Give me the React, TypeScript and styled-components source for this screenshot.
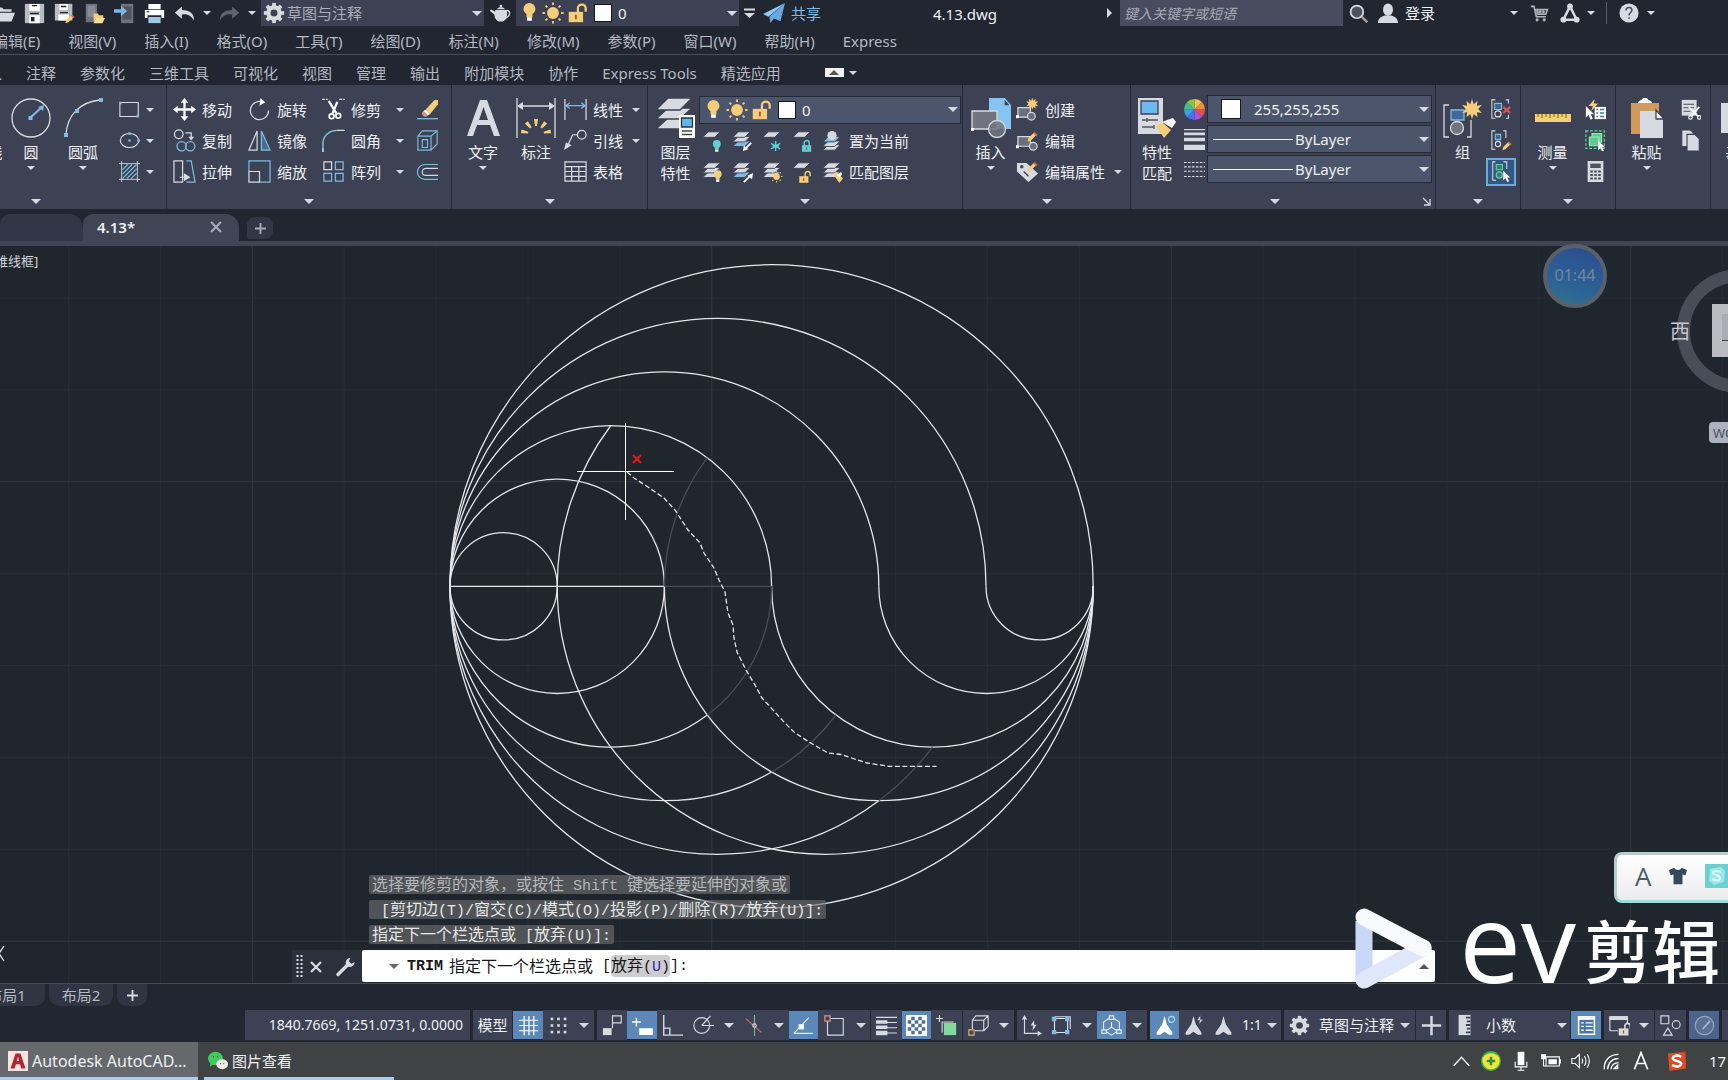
import React from "react";
import styled, { createGlobalStyle, css } from "styled-components";

const c = {
  dark: "#212631",
  panel: "#3c4253",
  field: "#4b556b",
  line: "#232935",
  text: "#eef0f4",
  menu: "#b4b9c3",
  icon: "#d7dae1",
  blue: "#7fbbe3",
  yellow: "#f6cd79",
  on: "#5b88b9",
};

const Global = createGlobalStyle`
  *, *::before, *::after { box-sizing: border-box; }
  html, body { margin: 0; height: 100%; overflow: hidden; background: ${c.dark}; }
  body { font: 15px/20px "Noto Sans", "Noto Sans CJK SC", sans-serif; color: ${c.text}; }
  button, input, select { font: inherit; color: inherit; margin: 0; padding: 0; border: 0; background: none; border-radius: 0; outline: none; }
  button { white-space: nowrap; cursor: pointer; }
`;

const Page = styled.div`
  display: flex;
  flex-direction: column;
  height: 100vh;
  overflow: hidden;
`;

const Caret = styled.span<{ $big?: boolean; $up?: boolean }>`
  flex: none;
  width: 0;
  height: 0;
  border: solid transparent;
  border-width: ${(p) => (p.$big ? "5px" : "4px")};
  border-top-color: ${c.icon};
  border-bottom-width: 0;
  ${(p) =>
    p.$up &&
    css`
      border-width: 0 5px 5px;
      border-bottom-color: #555;
    `}
`;

const Svg = styled.svg<{ $w?: number; $h?: number }>`
  flex: none;
  display: block;
  width: ${(p) => p.$w ?? 22}px;
  height: ${(p) => p.$h ?? p.$w ?? 22}px;
  fill: none;
  stroke: ${c.icon};
  stroke-width: 1.3;
`;

/* ---------- icon drawings, on a 24 unit square ---------- */
const W = c.icon;
const B = c.blue;
const Y = c.yellow;
const sheet = (y: number, fill = W) => <path d={`M8 ${y}h13l-6 6H2z`} fill={fill} stroke={c.panel} strokeWidth="1" />;
const bulb = (x: number, y: number, s: number, fill = Y) => (
  <g transform={`translate(${x} ${y}) scale(${s})`} stroke="none">
    <circle cx="5" cy="5" r="5" fill={fill} />
    <path d="M2.5 8h5v4h-5z" fill={fill} />
    <path d="M3 12h4v3H3z" fill="#fff" />
  </g>
);
const sunRays = [0, 45, 90, 135, 180, 225, 270, 315];
const sun = (x: number, y: number, s: number) => (
  <g transform={`translate(${x} ${y}) scale(${s})`}>
    <circle r="5.6" fill={Y} stroke="none" />
    {sunRays.map((a) => (
      <path key={a} d="M0-7.6V-10" transform={`rotate(${a})`} stroke={Y} strokeWidth="1.8" />
    ))}
  </g>
);
const lock = (x: number, y: number, s: number, fill = Y, open = true) => (
  <g transform={`translate(${x} ${y}) scale(${s})`}>
    <path d={open ? "M8 8V4a3.4 3.4 0 0 1 6.8 0v3" : "M3 8V4a3.4 3.4 0 0 1 6.8 0v4"} stroke={fill} strokeWidth="2" />
    <path d="M0 7h12.5v9H0z" fill={fill} stroke="none" />
    <path d="M6.2 9.5v4" stroke="#a4552c" strokeWidth="1.6" />
  </g>
);
const arrowCursor = (x: number, y: number, s = 1) => (
  <path d="M0 0v11l2.6-2.4L4.6 13l2-1-2-4.2H8z" transform={`translate(${x} ${y}) scale(${s})`} fill="#fff" stroke="none" />
);
const pencil = (x: number, y: number) => (
  <g transform={`translate(${x} ${y})`} stroke="none">
    <path d="M0 9l1-3.5L6.5 0 9 2.5 3.5 8z" fill={Y} />
    <path d="M6 .6L7.5-1l3 3L9 3.4z" fill="#e26a55" />
  </g>
);
const star = (x: number, y: number, s: number) => (
  <path
    transform={`translate(${x} ${y}) scale(${s})`}
    d="M0-9l1.6 4.6L5-7.4 4.4-3 9-3.6 5.6 0 9 3.6 4.4 3 5 7.4 1.6 4.6 0 9l-1.6-4.4L-5 7.4-4.4 3-9 3.6-5.6 0-9-3.6-4.4-3-5-7.4l3.4 3z"
    fill={Y}
    stroke="none"
  />
);
const aMan = <path d="M12 1l2.6 9.5L21 20v2.5h-4L12 19l-5 3.5H3V20l6.4-9.5z" fill={W} stroke="none" />;
const gear = (
  <g stroke="none" fill={W}>
    {[0, 45, 90, 135].map((a) => (
      <path key={a} d="M10 1h4v22h-4z" transform={`rotate(${a} 12 12)`} />
    ))}
    <circle cx="12" cy="12" r="8.5" />
    <circle cx="12" cy="12" r="3.8" fill={c.panel} />
  </g>
);

const icons: Record<string, React.ReactNode> = {
  folder: <path d="M0 5h9l2 2h9v3H6L2 20H0zM7 11h17l-4 10H3z" fill={W} stroke="none" />,
  save: <g stroke="none"><path d="M1 1h22v22H1z" fill="#b9bcc3" /><path d="M6 1h12v8H6zM6 14h12v9H6z" fill="#fff" /><path d="M9 3h6M7 12h10" stroke={c.dark} strokeWidth="1.5" /><path d="M8 16h4v5H8z" fill={c.dark} /></g>,
  saveAs: <g stroke="none"><path d="M1 1h20v19H1z" fill="#b9bcc3" /><path d="M6 1h10v7H6zM5 13h12v7H5z" fill="#fff" /><path d="M7 11h9M8 4h6" stroke={c.dark} strokeWidth="1.5" />{pencil(13, 14)}</g>,
  openCloud: <g stroke="none"><path d="M2 1h13v21H2z" fill="#6d727c" /><path d="M4 3h9v13H4z" fill="#868b95" /><path d="M11 12h5l1 2h5v3H14l-3 5z" fill={Y} /><path d="M14 17h10l-3 6H11z" fill="#ffdf9a" /></g>,
  saveCloud: <g stroke="none"><path d="M8 1h14v22H8z" fill="#6d727c" /><path d="M10 4h10v15H10z" fill="#4d525d" /><path d="M0 7h8V3l7 6-7 6v-4H0z" fill="#76b9e8" /></g>,
  print: <g stroke="none"><path d="M5 1h14v6H5zM1 8h22v9h-3v-3H4v3H1z" fill="#fff" /><path d="M5 16h14v7H5z" fill="#9cc9e6" /><path d="M3 10h3" stroke={c.dark} /></g>,
  undo: <path d="M9 4L1 11l8 7v-5c7-1 11 2 14 7 0-8-5-12-14-12z" fill={W} stroke="none" />,
  redo: <path d="M15 4l8 7-8 7v-5C8 12 4 15 1 20 1 12 6 8 15 8z" fill="#5d636f" stroke="none" />,
  gear,
  teapot: <g stroke="none" fill={W}><path d="M6 8h13c2 6-1 12-4 13h-5c-3-1-5-5-5-8L0 9l1-2 5 3zM8 7c1-3 8-3 9 0z" /><circle cx="12.5" cy="3.5" r="1.5" /><path d="M18 9c5-2 7 5-1 9" fill="none" stroke={W} strokeWidth="1.6" /></g>,
  bulb: bulb(6, 1, 1.3),
  sun: sun(12, 12, 1.15),
  lock: lock(3, 2, 1.25),
  plane: <g stroke="none"><path d="M24 1L0 13l6 3z" fill="#8ecbf5" /><path d="M24 1L7 16l1 7 4-5 7 3z" fill="#64ace0" /></g>,
  search: <g><circle cx="10" cy="10" r="8" fill="#4d525d" strokeWidth="2.2" /><path d="M16 16l7 7" stroke="#a99f92" strokeWidth="3" /></g>,
  user: <g stroke="none" fill={W}><ellipse cx="12" cy="8" rx="6" ry="7.5" /><path d="M0 24c0-7 6-8 8-9h8c2 1 8 2 8 9z" /></g>,
  cart: <g stroke="#b3b6bd" strokeWidth="2"><path d="M1 3h4l3 13h12M7 7h15l-2 6H8.5" /><path d="M9 8l1 4M13 8v4M17 8v4" strokeWidth="3" /><circle cx="9" cy="20" r="1" /><circle cx="18" cy="20" r="1" /></g>,
  tri: <g strokeWidth="3"><path d="M12 4L4 20h16z" /><circle cx="12" cy="4" r="2" fill={W} /><circle cx="4" cy="20" r="2" fill={W} /><circle cx="20" cy="20" r="2" fill={W} /></g>,
  help: <g><circle cx="12" cy="12" r="11.5" fill={W} stroke="none" /><path d="M8.5 9c0-5 7-4.5 7-.5 0 3-3.5 3-3.5 6.5M12 17v2" stroke="#444a57" strokeWidth="1.8" /></g>,
  rect: <g><path d="M1 4h21v16H1z" /><path d="M0 3h3v3H0zM20 18h3v3h-3z" fill={B} stroke="none" /></g>,
  ellipse: <g><ellipse cx="12" cy="12" rx="10.5" ry="8" /><circle cx="12" cy="12" r="1.5" fill={B} stroke="none" /><path d="M10.5 2.5h3v3h-3zM21 10.5h3v3h-3z" fill={B} stroke="none" /></g>,
  hatch: <g><path d="M3 0v24M21 0v24M0 3h24M0 21h24" strokeWidth="1" /><path d="M4 10l6-6M4 15L15 4M4 20L20 4M9 20L20 9M14 20l6-6" stroke={B} /></g>,
  move: <g strokeWidth="2.4" stroke="#fff"><path d="M12 4v16M4 12h16" /><path d="M12 0l4 5H8zM12 24l4-5H8zM0 12l5-4v8zM24 12l-5-4v8z" fill="#fff" stroke="none" /></g>,
  rotate: <g><path d="M16 4.5A9.5 9.5 0 1 0 21.5 13" /><path d="M13 0l5 4.5-6 3.5z" fill="#fff" stroke="none" /></g>,
  trim: <g><path d="M0 1.500h6M18 1.500h6" strokeDasharray="3 1" /><path d="M7 3l8 13M16 4l-5 12" stroke="#fff" strokeWidth="2.4" /><circle cx="10" cy="19" r="2.500" stroke="#fff" strokeWidth="1.800" /><circle cx="17" cy="18.500" r="2.500" stroke="#fff" strokeWidth="1.800" /></g>,
  erase: <g stroke="none"><path d="M10 12L20 1h4v5L15 17z" fill={Y} /><path d="M7 14l3-2 5 5-3 2z" fill="#fff" /><path d="M6 15c1-2 3 0 4 1s3 3 1 4-3 0-4-1-2-2-1-4z" fill="#e88a86" /><path d="M0 22.5h24" stroke={B} strokeWidth="1.5" /></g>,
  copy: <g><circle cx="6" cy="5.5" r="4.5" /><circle cx="9" cy="18" r="4.8" stroke={B} /><circle cx="18" cy="18" r="4.8" stroke={B} /><path d="M13 4h6v5" /><path d="M16 8h6l-3 4z" fill={W} stroke="none" /></g>,
  mirror: <g><path d="M9.5 2v20H1z" /><path d="M14 2v20h9z" stroke={B} fill="#4a6d8c" /></g>,
  fillet: <g><path d="M1 24V15C1 7 8 1.5 15 1.5" stroke={B} strokeWidth="1.5" /><path d="M15 1.5h9M1 20v4" /></g>,
  box: <g stroke={B}><path d="M1 7h15v16H1zM6 1h17v15l-7 7M1 7l5-6M16 7l7-6" /><path d="M6 11h6v9H6z" /></g>,
  stretch: <g><path d="M1 1h9v22H1z" /><path d="M14 1h5l4 22h-9" stroke={B} /><path d="M7 18h8M12 15l5 3-5 3z" fill={W} /></g>,
  scale: <g><path d="M1 12V1h22v22H12" stroke={B} /><path d="M1 12h11v11H1z" /></g>,
  array: <g stroke={B}><path d="M2 2h8v8H2z" stroke={W} /><path d="M14 2h8v8h-8zM2 14h8v8H2zM14 14h8v8h-8z" /></g>,
  offset: <g><path d="M24 4H9a8 8 0 0 0 0 17h15" stroke={B} /><path d="M24 8.5H10a4 4 0 0 0 0 8h14" /></g>,
  linear: <g><path d="M1 1v22M23 1v22" /><path d="M2 8h20M6 5L2 8l4 3M18 5l4 3-4 3" stroke={B} /></g>,
  leader: <g><circle cx="18.5" cy="6" r="4.5" /><path d="M14 6H9L3 19" /><path d="M0 22l2-8 6 3z" fill={W} stroke="none" /></g>,
  table: <g><path d="M1 2h22v20H1zM1 7h22M1 12h22M1 17h22M8 7v15M15.5 7v15" /></g>,
  layOff: <g>{sheet(2)}{bulb(13, 11, 0.85, "#5fd0d4")}</g>,
  layIso: <g>{sheet(12, B)}{sheet(7)}{sheet(2)}<path d="M22 14l-6 6" stroke="#fff" strokeWidth="2" /><path d="M13 23l1-6 5 4z" fill="#fff" stroke="none" /></g>,
  layFrz: <g>{sheet(2)}<path d="M16 12v11M11 14.5l10 6M21 14.5l-10 6M12.5 17.5h7" stroke="#5fd0d4" strokeWidth="1.6" /></g>,
  layLock: <g>{sheet(2)}{lock(12, 11, 0.8, "#5fd0d4", false)}</g>,
  layCur: <g>{sheet(16)}{sheet(12)}{sheet(7, B)}<circle cx="12" cy="6" r="5" fill={W} stroke="none" /></g>,
  layOn: <g>{sheet(12)}{sheet(7)}{sheet(2)}{bulb(14, 10, 0.85)}</g>,
  layUniso: <g>{sheet(12, B)}{sheet(7)}{sheet(2)}<path d="M14 23l6-6" stroke="#fff" strokeWidth="2" /><path d="M24 13l-1 7-5-4z" fill="#fff" stroke="none" /></g>,
  layThaw: <g>{sheet(12)}{sheet(7)}{sheet(2)}{sun(17, 17, 0.65)}</g>,
  layUnlock: <g>{sheet(2)}{lock(9, 11, 0.8)}</g>,
  layMatch: <g>{sheet(12)}{sheet(7)}{sheet(2)}<path d="M13 14l4-2 7 7-4 5z" fill={Y} stroke="none" /><path d="M17 15l5-3 1 3-3 3z" fill="#fff" stroke="none" /></g>,
  create: <g><path d="M2 10h13v10H2z" fill="#6a6f7c" /><circle cx="16" cy="19" r="4" fill="#6a6f7c" /><path d="M0 18h3v3H0z" fill="#fff" stroke="none" />{star(17, 6, 0.7)}</g>,
  editBlk: <g><path d="M2 8h13v10H2z" fill="#6a6f7c" /><circle cx="18" cy="18" r="4" fill="#6a6f7c" /><path d="M0 17h3v3H0z" fill="#fff" stroke="none" />{pencil(12, 4)}</g>,
  editAttr: <g><path d="M1 3h10l12 11-10 9L1 12z" fill={W} stroke="none" /><circle cx="6" cy="7" r="1.8" fill={c.panel} stroke="none" /><path d="M8 12l5 5" stroke={c.panel} />{pencil(12, 3)}</g>,
  wheel: <g stroke="none">{["#f2c14e", "#f08b3e", "#e0524d", "#b04ee0", "#4e6be8", "#3aa0e8", "#3ec28e", "#8bc34a"].map((f, i) => <path key={f} d="M12 12V0a12 12 0 0 1 8.49 3.51z" fill={f} transform={`rotate(${i * 45} 12 12)`} />)}</g>,
  weights: <g fill={W} stroke="none"><path d="M0 0h24v1.5H0zM0 4h24v3H0zM0 10h24v4H0zM0 18h24v6H0z" /></g>,
  dashes: <path d="M0 4h24M0 9h24M0 14h24M0 20h24" strokeDasharray="3 1.5" strokeWidth="1.4" />,
  ungroup: <g><path d="M5 1H1v21h4M17 1h3v4M17 22h3v-4" strokeWidth="1.2" /><path d="M4 5h8v7H4z" fill="#43668c" stroke={B} /><circle cx="8" cy="17" r="3.5" /><path d="M14 9l8 7M22 9l-8 7" stroke="#e05252" strokeWidth="2.5" /></g>,
  groupEdit: <g><path d="M5 1H1v21h4M14 1h3v8" strokeWidth="1.2" /><path d="M5 5h6v6H5z" fill="#43668c" stroke={B} /><circle cx="8" cy="16" r="3" />{pencil(13, 14)}</g>,
  groupSel: <g><path d="M5 1H2v21h4M14 1h4v8" strokeWidth="1.2" /><path d="M6 4h7v6H6z" fill="#3c7a6c" stroke="#63d49a" /><circle cx="9.5" cy="16" r="3.5" fill="#3c7a6c" stroke="#63d49a" />{arrowCursor(14, 11)}</g>,
  quickSel: <g stroke="none"><path d="M11 0L4 8h5l-2 6 8-9h-5z" fill={Y} />{arrowCursor(1, 8, 1.2)}<path d="M11 9h13v14H11z" fill="#fff" /><path d="M13 12h2M13 16h2M13 20h2M17 12h5M17 16h5M17 20h5" stroke="#3d78b5" strokeWidth="1.5" /></g>,
  selAll: <g><path d="M1 1h21v20H1z" stroke="#6fe0a0" strokeDasharray="3 2" /><path d="M8 4h11v10H8z" fill="#63c98f" stroke="#8ff0b8" /><path d="M5 8h11v10H5z" fill="#63c98f" stroke="#8ff0b8" />{arrowCursor(15, 12)}</g>,
  calc: <g stroke="none"><path d="M3 0h18v24H3z" fill={W} /><path d="M6 3h12v5H6z" fill="#4d525d" /><path d="M6 12h12M6 16h12M6 20h12" stroke="#4d525d" strokeWidth="2.5" strokeDasharray="3 1.5" /></g>,
  cut: <g><path d="M2 1h17v18H2z" fill={W} stroke="none" /><path d="M4 6h12M4 10h12M4 14h8" stroke="#4d525d" /><path d="M10 9l11 11M22 9L13 20" stroke="#fff" strokeWidth="2" /><circle cx="12" cy="21" r="2" stroke="#fff" /><circle cx="22" cy="21" r="2" stroke="#fff" /></g>,
  copyDoc: <g fill={W} stroke={c.panel}><path d="M2 0h10l5 5v14H2z" /><path d="M8 5h9l5 5v14H8z" /></g>,
  grid: <path d="M7 1v22M12.5 1v22M18 1v22M1 6h22M1 12h22M1 18h22" stroke="#fff" strokeWidth="1.4" />,
  dots: <g fill={W} stroke="none">{[3, 10.5, 18].map((y) => [3, 10.5, 18].map((x) => <path key={`${x}${y}`} d={`M${x} ${y}h3v3h-3z`} />))}</g>,
  infer: <g><path d="M12 1h10v8H12zM12 9v6" /><path d="M1 15h10v8H1z" fill={W} stroke="none" /></g>,
  dyn: <g stroke="#fff" strokeWidth="1.6"><path d="M5 3v10M0 8h10" /><path d="M9 16h14v6H9z" fill="#fff" /></g>,
  ortho: <path d="M2 0v23h22M2 15h7v8" strokeWidth="1.6" />,
  polar: <g><circle cx="10" cy="12" r="9" /><path d="M10 12L20 1M10 12h14" /></g>,
  iso: <g><path d="M12 0v24" stroke="#78b98a" /><path d="M2 4l18 16" stroke="#b96a64" /><circle cx="12" cy="12" r="2" /></g>,
  track: <g stroke="#dfeaf6"><path d="M1 21L18 3M1 21h22" /><path d="M7 11h5v5H7z" fill="#fff" /></g>,
  osnap: <g><path d="M4 4h18v19H4z" /><path d="M1 1h6v6H1z" stroke="#dd9a82" fill={c.panel} /></g>,
  lwt: <g fill={W} stroke="none"><path d="M0 2h24v1.5H0zM0 8h24v1H0zM0 14h24v1H0zM0 20h24v1H0zM0 6h13v4H0zM0 12h13v4H0zM0 18h13v5H0z" /></g>,
  checker: <g stroke="none"><path d="M0 0h24v24H0z" fill="#fff" />{[0, 1, 2, 3, 4].map((r) => [0, 1, 2, 3, 4].map((k) => (r + k) % 2 ? <path key={`${r}${k}`} d={`M${2 + k * 4} ${2 + r * 4}h4v4h-4z`} fill="#4c6f95" /> : null))}</g>,
  cycle: <g><path d="M4 0v8M0 4h8M7 8h13M7 8v12" /><path d="M9 9h14v14H9z" fill="#7fdc9d" stroke="none" /></g>,
  snap3: <g><path d="M5 6h13v12H8M5 6v10M5 6l4-5h14v12l-5 5M18 6l5-5" /><path d="M1 17h6v6H1z" stroke="#eab26e" /></g>,
  ucs: <g><path d="M4 3v18h17" /><path d="M4 0l3 5H1zM24 21l-5-3v6z" fill={W} stroke="none" /><path d="M15 6l-4 6h3l-1 6 5-7h-3z" fill={W} stroke="none" /></g>,
  filter: <g><path d="M4 4h15v16H4z" stroke="#dfe3ea" /><path d="M4 2h18v14" /><path d="M1 2h5v5H1zM16 2h5v5h-5zM1 17h5v5H1zM16 17h5v5h-5z" fill={B} stroke="none" /></g>,
  gizmo: <g stroke="#e6eef8"><path d="M12 2l9 6v9l-9 6-9-6V8zM12 8v6l-8 5M12 14l8 5" /><path d="M9.5 1h5v4h-5zM1 17h5v4H1zM18 17h5v4h-5z" fill={c.on} /></g>,
  ann1: <g><path d="M12 1l2.6 9.5L21 20v2.5h-4L12 19l-5 3.5H3V20l6.4-9.5z" fill="#fff" stroke="none" /><circle cx="20" cy="5" r="3.5" stroke="#a8dcf5" /></g>,
  ann2: <g>{aMan}<path d="M20 0l-4 6h3l-1 5 5-6h-3z" fill={W} stroke={c.panel} strokeWidth=".6" /></g>,
  ann3: aMan,
  plus: <path d="M12 1v22M1 12h22" strokeWidth="2.8" />,
  ruler: <g><path d="M5 1h13v22H5z" fill={W} stroke="none" /><path d="M18 4h-5M18 8h-4M18 12h-5M18 16h-4M18 20h-5" stroke={c.panel} strokeWidth="2" /></g>,
  props: <g><path d="M3 2h18v20H3z" fill="#4675ad" stroke="#fff" strokeWidth="1.8" /><path d="M3 4h18" stroke="#fff" strokeWidth="3" /><path d="M6 9h3M6 13h3M6 17.5h3M11 9h8M11 13h8M11 17.5h8" stroke="#fff" strokeWidth="1.6" /></g>,
  lockUi: <g><path d="M1 2h20v8M1 2v16h9" /><path d="M1 2h20v3H1z" fill={W} />{lock(11, 9, 0.9, W)}</g>,
  shapes: <g><path d="M1 1h9v9H1z" /><circle cx="18.5" cy="11" r="4.5" /><path d="M9 15l5 8H4z" /></g>,
  gauge: <g><circle cx="12" cy="12" r="10.5" stroke="#8fa5c2" fill="#5a7195" /><path d="M10 16l8-9" stroke="#a9b9cf" strokeWidth="2" /></g>,
};

const Icon = ({ n, s }: { n: string; s?: number }) => (
  <Svg $w={s} viewBox="0 0 24 24" aria-hidden="true">
    {icons[n]}
  </Svg>
);

/* ---------- title bar ---------- */
const TitleBar = styled.header`
  flex: none;
  display: flex;
  align-items: center;
  height: 26px;
  overflow: hidden;
`;
const QuickAccess = styled.div`
  display: flex;
  align-items: center;
  margin: 0 2px 0 -11px;
`;
const Slot = styled.button<{ $w?: number }>`
  flex: none;
  display: flex;
  align-items: center;
  justify-content: center;
  width: ${(p) => p.$w ?? 30}px;
  height: 26px;
`;
const Combo = styled.div<{ $w?: number; $flat?: boolean }>`
  display: flex;
  align-items: center;
  gap: 2px;
  width: ${(p) => (p.$w ? p.$w + "px" : "100%")};
  height: ${(p) => (p.$flat ? 26 : 28)}px;
  padding: 0 2px;
  background: ${(p) => (p.$flat ? c.panel : c.field)};
  border: ${(p) => (p.$flat ? "0" : `1px solid ${c.line}`)};
  position: relative;
  ${Caret} {
    position: absolute;
    right: 2px;
  }
`;
const Select = styled.select<{ $muted?: boolean }>`
  appearance: none;
  flex: 1;
  min-width: 0;
  height: 100%;
  color: ${(p) => (p.$muted ? "#a8adb8" : c.text)};
`;
const Swatch = styled.span<{ $s: number; $m: number }>`
  flex: none;
  width: ${(p) => p.$s}px;
  height: ${(p) => p.$s}px;
  margin: 0 ${(p) => p.$m}px;
  background: #fff;
  border: 1px solid #14181f;
`;
const Share = styled.button`
  display: flex;
  align-items: center;
  gap: 6px;
  color: #7dbcea;
  margin-left: 4px;
`;
const DocName = styled.h1`
  flex: 1;
  margin: 0;
  padding: 2px 0 0 8px;
  font-size: 15px;
  font-weight: 400;
  text-align: center;
`;
const Search = styled.input`
  width: 223px;
  height: 26px;
  padding: 0 4px;
  background: #474d5f;
  &::placeholder {
    color: #a4a9b4;
    font-style: italic;
    font-size: 14px;
    opacity: 1;
  }
`;
const Right = styled.span`
  width: 0;
  height: 0;
  margin: 0 8px 0 6px;
  border: 5px solid transparent;
  border-left-color: ${c.icon};
  border-right: 0;
`;
const Account = styled.div`
  display: flex;
  align-items: center;
  width: 385px;
`;
const Login = styled.button`
  margin: 0 auto 0 2px;
`;
const Rule = styled.span`
  width: 1px;
  height: 22px;
  margin: 0 8px;
  background: #555b68;
`;
const Tail = styled.div`
  flex: none;
  display: flex;
  align-items: center;
  width: 171px;
`;

/* ---------- menus ---------- */
const Menu = styled.nav`
  flex: none;
  display: flex;
  align-items: center;
  gap: 28px;
  height: 29px;
  padding-top: 2px;
  border-bottom: 1px solid #474d59;
  color: ${c.menu};
`;
const MenuItem = styled.button<{ $pull?: number }>`
  flex: none;
  margin-left: ${(p) => (p.$pull ? -p.$pull : 0)}px;
`;
const Tabs = styled(Menu)`
  gap: 24px;
  height: 30px;
  padding-top: 5px;
  border: 0;
`;
const Minimise = styled.button`
  display: flex;
  align-items: center;
  gap: 5px;
  margin-left: 20px;
`;
const MinimiseBox = styled.i`
  display: flex;
  align-items: center;
  justify-content: center;
  width: 19px;
  height: 9px;
  background: #f0f1f4;
`;

/* ---------- ribbon ---------- */
const Ribbon = styled.section`
  flex: none;
  display: flex;
  height: 124px;
  overflow: hidden;
  background: ${c.panel};
`;
const PanelBox = styled.div<{ $w: number; $pull?: number }>`
  flex: none;
  display: flex;
  flex-direction: column;
  width: ${(p) => p.$w}px;
  margin-left: ${(p) => (p.$pull ? -p.$pull : 0)}px;
  border-right: 1px solid ${c.line};
`;
const PanelBody = styled.div<{ $cols: string; $pad: number }>`
  flex: 1;
  display: grid;
  grid-template-columns: ${(p) => p.$cols};
  align-content: start;
  padding: 9px 0 0 ${(p) => p.$pad}px;
`;
const PanelFoot = styled.button<{ $launcher?: boolean }>`
  display: flex;
  align-items: center;
  justify-content: center;
  position: relative;
  height: 16px;
  padding-right: ${(p) => (p.$launcher ? 16 : 0)}px;
  svg {
    position: absolute;
    right: 4px;
  }
`;
const Stack = styled.div<{ $row?: number }>`
  display: grid;
  grid-auto-rows: ${(p) => p.$row ?? 31}px;
  align-content: start;
  align-items: center;
`;
const Tool = styled.button`
  display: flex;
  align-items: center;
  gap: 6px;
  width: 100%;
  height: 28px;
  padding-right: 8px;
  ${Caret} {
    margin-left: auto;
  }
`;
const IconTool = styled.button<{ $on?: boolean }>`
  display: flex;
  align-items: center;
  justify-content: center;
  gap: 6px;
  width: 100%;
  height: 28px;
  ${(p) =>
    p.$on &&
    css`
      background: #34577f;
      border: 2px solid #6ea9dc;
    `}
`;
const Big = styled.button`
  display: flex;
  flex-direction: column;
  align-items: center;
  padding-top: 4px;
  line-height: 21px;
  white-space: pre-line;
  svg {
    margin-bottom: 4px;
  }
  ${Caret} {
    margin-top: 3px;
  }
`;
const LayerRow = styled.div`
  display: flex;
  align-items: center;
  gap: 8px;
  padding-left: 2px;
`;
const Flat = styled.button`
  display: flex;
  align-items: center;
  gap: 6px;
`;
const Sample = styled.span`
  flex: none;
  width: 80px;
  height: 1px;
  margin-left: 3px;
  background: ${c.text};
`;

type PanelProps = { w: number; pad: number; cols: string; pull?: number; foot?: boolean; launcher?: boolean; children: React.ReactNode };
const Panel = ({ w, pad, cols, pull, foot = true, launcher, children }: PanelProps) => (
  <PanelBox $w={w} $pull={pull}>
    <PanelBody $cols={cols} $pad={pad}>
      {children}
    </PanelBody>
    {foot && (
      <PanelFoot aria-label="展开面板" $launcher={launcher}>
        <Caret $big />
        {launcher && (
          <Svg $w={9} viewBox="0 0 9 9">
            <path d="M1 1l6 6M8 2v6H2" />
          </Svg>
        )}
      </PanelFoot>
    )}
  </PanelBox>
);

type BigProps = { label: string; caret?: boolean; w?: number; children: React.ReactNode };
const BigTool = ({ label, caret, w = 40, children }: BigProps) => (
  <Big>
    <Svg $w={w} $h={40} viewBox={`0 0 ${w} 40`} aria-hidden="true">
      {children}
    </Svg>
    {label}
    {caret && <Caret />}
  </Big>
);
type Item = [icon: string, label: string, caret?: boolean];
const ToolStack = ({ items }: { items: Item[] }) => (
  <Stack>
    {items.map(([icon, label, caret]) => (
      <Tool key={label}>
        <Icon n={icon} s={23} />
        {label}
        {caret && <Caret />}
      </Tool>
    ))}
  </Stack>
);
const IconStack = ({ items, caret, on, row }: { items: [string, string][]; caret?: boolean; on?: string; row?: number }) => (
  <Stack $row={row}>
    {items.map(([icon, label]) => (
      <IconTool key={label} aria-label={label} $on={on === icon}>
        <Icon n={icon} s={21} />
        {caret && <Caret />}
      </IconTool>
    ))}
  </Stack>
);
const LayerCombo = ({ w, flat }: { w?: number; flat?: boolean }) => (
  <Combo $w={w} $flat={flat}>
    <Icon n="bulb" />
    <Icon n="sun" />
    <Icon n="lock" />
    <Swatch $s={18} $m={4} />
    <Select aria-label="图层">
      <option>0</option>
    </Select>
    <Caret $big />
  </Combo>
);

/* ---------- document tabs ---------- */
const DocTabs = styled.div`
  flex: none;
  display: flex;
  align-items: flex-end;
  height: 37px;
  padding-top: 5px;
  border-bottom: 5px solid #3f4555;
`;
const DocTab = styled.div<{ $on?: boolean; $w: number }>`
  display: flex;
  align-items: center;
  justify-content: space-between;
  width: ${(p) => p.$w}px;
  height: 27px;
  padding: 0 17px 2px 14px;
  border-radius: 10px 14px 0 0;
  background: ${(p) => (p.$on ? "#3f4555" : "#313746")};
  font-weight: 600;
`;
const Close = styled.button`
  color: #a7acb6;
  display: flex;
`;
const AddTab = styled.button`
  display: flex;
  align-items: center;
  justify-content: center;
  width: 26px;
  height: 22px;
  margin: 0 0 2px 8px;
  border-radius: 8px 8px 8px 2px;
  background: #313746;
`;

/* ---------- drawing area ---------- */
const Canvas = styled.main`
  flex: 1;
  min-height: 0;
  position: relative;
  background: #20262e;
  border-bottom: 1px solid #474c55;
`;
const Drawing = styled.svg`
  display: block;
  width: 100%;
  height: 100%;
  fill: none;
  stroke: #e4e6ea;
  stroke-width: 1.3;
`;
const ViewLabel = styled.span`
  position: absolute;
  left: -18px;
  top: 5px;
  font-size: 13px;
  color: #d3d6da;
`;
const Timer = styled.div`
  position: absolute;
  right: 121px;
  top: -2px;
  width: 64px;
  height: 64px;
  border: 4px solid #59606b;
  border-radius: 50%;
  background: linear-gradient(200deg, #2a4d8e, #2c6596 70%, #2f7488);
  color: #74869c;
  font-size: 16px;
  line-height: 54px;
  text-align: center;
`;
const Compass = styled.div`
  position: absolute;
  right: -73px;
  top: 23px;
  width: 124px;
  height: 124px;
  border: 13px solid #484d57;
  border-radius: 50%;
`;
const West = styled.span`
  position: absolute;
  right: 38px;
  top: 76px;
  font-size: 20px;
  color: #c6c8cd;
`;
const Cube = styled.div`
  position: absolute;
  right: -37px;
  top: 58px;
  width: 53px;
  height: 53px;
  padding: 10px;
  background: #babcc1;
  &::before {
    content: "";
    display: block;
    height: 27px;
    background: #a9adb5;
    border-bottom: 1px solid #3a3f48;
  }
`;
const Wcs = styled.button`
  position: absolute;
  right: -31px;
  top: 176px;
  width: 50px;
  height: 21px;
  padding-left: 4px;
  border-radius: 4px;
  background: #aeb2c0;
  color: #4c5160;
  font-size: 13px;
  line-height: 20px;
  text-align: left;
`;
const Ime = styled.div`
  position: absolute;
  right: -6px;
  top: 606px;
  display: flex;
  align-items: center;
  gap: 18px;
  width: 120px;
  height: 51px;
  padding: 0 0 4px 18px;
  border: 3px solid #b9cdd0;
  border-bottom-color: #9adfdc;
  border-radius: 8px 0 0 8px;
  background: linear-gradient(#fff, #ececee);
  color: #4a5a66;
  font: 26px/40px "Open Sans", sans-serif;
`;
const Brand = styled.div`
  position: absolute;
  right: 8px;
  top: 660px;
  display: flex;
  align-items: center;
  height: 86px;
  color: #fff;
`;
const BrandLatin = styled.span`
  margin: -18px 8px 0 24px;
  font: 500 110px/86px "Open Sans", sans-serif;
`;
const BrandHan = styled.span`
  font: 500 68px/86px "Noto Sans CJK SC", sans-serif;
`;

/* ---------- command line ---------- */
const Command = styled.div`
  position: absolute;
  left: 292px;
  right: 293px;
  bottom: 0;
`;
const History = styled.ol`
  display: flex;
  flex-direction: column;
  align-items: flex-start;
  gap: 6px;
  margin: 0 0 6px 77px;
  padding: 0;
  list-style: none;
`;
const HistoryLine = styled.li<{ $dim?: boolean }>`
  height: 19px;
  padding: 0 3px;
  border-radius: 2px;
  background: rgba(112, 112, 112, 0.62);
  color: ${(p) => (p.$dim ? "#b4b6ba" : "#e6e7e9")};
  font-size: 16px;
  line-height: 19px;
  white-space: pre;
`;
const Mono = styled.code`
  font: 15px/19px "Liberation Mono", monospace;
`;
const Verb = styled(Mono)`
  font-weight: 700;
  margin: 0 6px 0 8px;
`;
const Prompt = styled.div`
  display: flex;
  height: 33px;
`;
const Grip = styled.div`
  display: flex;
  align-items: center;
  gap: 7px;
  width: 70px;
  padding-left: 4px;
  background: #2b303c;
`;
const PromptText = styled.label`
  flex: 1;
  display: flex;
  align-items: center;
  height: 32px;
  padding: 0 6px 0 27px;
  background: #fff;
  border-radius: 2px;
  color: #15171a;
  font-size: 16px;
  white-space: pre;
  input {
    flex: 1;
    min-width: 0;
    height: 28px;
  }
`;
const GreyCaret = styled(Caret)`
  border-top-color: #666;
`;
const Option = styled.button`
  height: 22px;
  border-radius: 4px;
  background: #cdcdcf;
  u {
    color: #2f22b8;
    text-decoration: none;
  }
`;
const Han = ({ children }: { children: string }) => (
  <>{children.split(/([\x20-\x7e]+)/).map((t, i) => (i % 2 ? <Mono key={i}>{t}</Mono> : t))}</>
);

/* ---------- bottom bars ---------- */
const Layouts = styled.div`
  flex: none;
  display: flex;
  height: 26px;
  gap: 4px;
  color: ${c.menu};
`;
const LayoutTab = styled.button<{ $w: number; $pull?: number }>`
  display: flex;
  align-items: center;
  justify-content: center;
  width: ${(p) => p.$w}px;
  height: 22px;
  margin-left: ${(p) => (p.$pull ? -p.$pull : 0)}px;
  border-radius: 0 0 10px 10px;
  background: #2f3543;
`;
const Status = styled.footer`
  flex: none;
  display: flex;
  gap: 3px;
  height: 32px;
  padding: 0 0 2px 245px;
  overflow: hidden;
`;
const Segment = styled.div`
  flex: none;
  display: flex;
  background: ${c.panel};
`;
const Cell = styled.button<{ $w: number; $on?: boolean; $dim?: boolean; $rule?: boolean }>`
  display: flex;
  align-items: center;
  justify-content: center;
  width: ${(p) => p.$w}px;
  height: 30px;
  border: solid ${c.line};
  border-width: 0 ${(p) => (p.$rule ? 1 : 0)}px 0 0;
  ${(p) =>
    p.$on &&
    css`
      background: ${p.$dim ? "#4c6489" : c.on};
      border-width: 1px 0;
    `}
`;
const Coords = styled.output`
  width: 225px;
  padding-right: 7px;
  font-size: 14px;
  line-height: 30px;
  text-align: right;
`;
const Scale = styled(Cell)`
  gap: 5px;
  font-size: 14px;
`;
const Workspace = styled(Cell)`
  gap: 6px;
`;
const Units = styled(Cell)`
  gap: 10px;
  padding: 0 3px 0 5px;
  justify-content: flex-start;
  ${Caret} {
    margin-left: auto;
  }
`;
const Taskbar = styled.div`
  flex: none;
  display: flex;
  height: 38px;
  gap: 6px;
  background: #414244;
  overflow: hidden;
`;
const Task = styled.button<{ $w: number; $on?: boolean }>`
  display: flex;
  align-items: center;
  gap: 4px;
  width: ${(p) => p.$w}px;
  padding: 3px 0 0 ${(p) => (p.$on ? 8 : 4)}px;
  border-bottom: 3px solid #a8cdf0;
  background: ${(p) => (p.$on ? "#66686b" : "transparent")};
  font-size: ${(p) => (p.$on ? 16 : 15)}px;
`;
const Tray = styled.div`
  display: flex;
  align-items: center;
  margin-left: auto;
`;
const TrayIcon = styled.button<{ $w?: number }>`
  display: flex;
  align-items: center;
  justify-content: center;
  width: ${(p) => p.$w ?? 30}px;
`;
const Clock = styled.time`
  width: 30px;
  padding-left: 11px;
`;

/* ---------- drawing geometry ---------- */
const U = 53.6;
const LX = 450;
const RX = LX + 12 * U;
const CY = 586.3;
const minors = Array.from({ length: 36 }, (_, i) => i - 8);

const Sketch = () => (
  <Drawing aria-label="4.13">
    <g transform="translate(0 -246)">
      <g strokeWidth="1">
        {minors.map((i) => (
          <path key={i} d={`M${711.8 + i * 91.9} 0V2000M0 ${481.7 + i * 91.9}H4000`} stroke={i % 5 === 0 ? "#303844" : "#262d35"} />
        ))}
      </g>
      <circle cx={LX + 6 * U} cy={CY} r={6 * U} />
      <circle cx={LX + U} cy={CY} r={U} />
      <circle cx={LX + 2 * U} cy={CY} r={2 * U} />
      {[3, 4, 5].map((k) => (
        <path key={k} d={`M${LX} ${CY}a${k * U} ${k * U} 0 0 1 ${2 * k * U} 0`} />
      ))}
      {[1, 2, 3, 4, 5].map((k) => (
        <path key={k} d={`M${RX} ${CY}a${k * U} ${k * U} 0 0 1 ${-2 * k * U} 0`} />
      ))}
      <path d={`M${LX} ${CY}A${3 * U} ${3 * U} 0 0 0 707.3 714.9`} />
      <path d={`M${LX} ${CY}A${4 * U} ${4 * U} 0 0 0 771.6 772`} />
      <path d={`M${LX} ${CY}A${5 * U} ${5 * U} 0 0 0 878.8 800.7`} />
      <path d={`M${LX + 2 * U} ${CY}A${5 * U} ${5 * U} 0 0 1 610.8 425.5M${LX} ${CY}h${4 * U}`} />
      <g stroke="#484d55">
        <path d={`M707.3 714.9A${3 * U} ${3 * U} 0 0 0 771.6 ${CY}`} />
        <path d={`M771.6 772A${4 * U} ${4 * U} 0 0 0 835.9 715`} />
        <path d={`M878.8 800.7A${5 * U} ${5 * U} 0 0 0 932.4 747.1`} />
        <path d={`M${LX + 4 * U} ${CY}A${4 * U} ${4 * U} 0 0 1 707.3 457.7`} />
        <path d={`M${LX + 4 * U} ${CY}h${2 * U}`} />
      </g>
      <path
        strokeDasharray="5 2.5"
        d="M627 472L634 478 648 487 664 498 675 510 688 530 700 543 704 553 714 568 719 580 725 592 728 613 733 625 734 638 737 652 746 670 755 685 762 698 773 710 784 722 794 732 809 742 828 753 841 754.5 867 763 889 766.3H936.5"
      />
      <path d="M625.5 423V520M577 471.5H674" strokeWidth="1" stroke="#fff" />
      <path d="M633 455l8 8M641 455l-8 8" stroke="#e0161c" strokeWidth="2.2" />
      <path d="M-6 946L4 961M4 946L-6 961" />
    </g>
  </Drawing>
);

const menuItems = ["编辑(E)", "视图(V)", "插入(I)", "格式(O)", "工具(T)", "绘图(D)", "标注(N)", "修改(M)", "参数(P)", "窗口(W)", "帮助(H)", "Express"];
const ribbonTabs = ["插入", "注释", "参数化", "三维工具", "可视化", "视图", "管理", "输出", "附加模块", "协作", "Express Tools", "精选应用"];
const quick: [string, string][] = [["folder", "打开"], ["save", "保存"], ["saveAs", "另存为"], ["openCloud", "从云打开"], ["saveCloud", "保存到云"], ["print", "打印"], ["undo", "放弃"]];

type CellSpec = { i?: string; w: number; on?: boolean; dim?: boolean; rule?: boolean };
const Cells = ({ items }: { items: CellSpec[] }) => (
  <>
    {items.map((x, k) => (
      <Cell key={k} $w={x.w} $on={x.on} $dim={x.dim} $rule={x.rule} aria-label={x.i ?? "选项"}>
        {x.i ? <Icon n={x.i} s={21} /> : <Caret $big />}
      </Cell>
    ))}
  </>
);

export default function App() {
  return (
    <Page>
      <Global />
      <TitleBar>
        <QuickAccess>
          {quick.map(([n, l]) => (
            <Slot key={n} aria-label={l}>
              <Icon n={n} s={21} />
            </Slot>
          ))}
          <Slot $w={15} aria-label="放弃列表"><Caret /></Slot>
          <Slot aria-label="重做"><Icon n="redo" s={21} /></Slot>
          <Slot $w={15} aria-label="重做列表"><Caret /></Slot>
        </QuickAccess>
        <Combo $w={223} $flat>
          <Icon n="gear" />
          <Select $muted aria-label="工作空间"><option>草图与注释</option></Select>
          <Caret $big />
        </Combo>
        <Slot $w={32} aria-label="渲染"><Icon n="teapot" s={21} /></Slot>
        <LayerCombo w={223} flat />
        <Slot $w={20} aria-label="自定义">
          <Svg $w={11} viewBox="0 0 11 11"><path d="M0 1.5h11" strokeWidth="2" /><path d="M0 5h11l-5.5 5z" fill={W} stroke="none" /></Svg>
        </Slot>
        <Share><Icon n="plane" />共享</Share>
        <DocName>4.13.dwg</DocName>
        <Right />
        <Search placeholder="键入关键字或短语" aria-label="搜索" />
        <Account>
          <Slot aria-label="搜索"><Icon n="search" s={19} /></Slot>
          <Slot aria-label="用户"><Icon n="user" s={20} /></Slot>
          <Login>登录</Login>
          <Slot $w={15} aria-label="登录选项"><Caret /></Slot>
          <Slot $w={36} aria-label="商店"><Icon n="cart" s={19} /></Slot>
          <Tail>
            <Slot $w={26} aria-label="Autodesk"><Icon n="tri" s={20} /></Slot>
            <Slot $w={15} aria-label="更多"><Caret /></Slot>
            <Rule />
            <Slot $w={28} aria-label="帮助"><Icon n="help" s={20} /></Slot>
            <Slot $w={15} aria-label="帮助选项"><Caret /></Slot>
          </Tail>
        </Account>
      </TitleBar>

      <Menu>
        {menuItems.map((m, i) => <MenuItem key={m} $pull={i ? 0 : 7}>{m}</MenuItem>)}
      </Menu>
      <Tabs>
        {ribbonTabs.map((m, i) => <MenuItem key={m} $pull={i ? 0 : 28}>{m}</MenuItem>)}
        <Minimise aria-label="最小化功能区"><MinimiseBox><Caret $up /></MinimiseBox><Caret /></Minimise>
      </Tabs>

      <Ribbon>
        <Panel w={262} pull={95} pad={44} cols="62px 40px 64px 42px">
          <BigTool label="多段线"><path d="M4 34C4 10 20 34 24 20s12-4 14 0" /></BigTool>
          <BigTool label="圆" caret>
            <circle cx="20" cy="20" r="19" /><path d="M19 20l12-11" stroke={B} strokeWidth="2" /><path d="M17.5 18h4v4h-4z" fill={B} stroke="none" /><path d="M33 7l-1 6-5-4z" fill={B} stroke="none" />
          </BigTool>
          <BigTool label="圆弧" caret>
            <path d="M3 37C4 16 18 4 37 2" /><path d="M1 35h4v4H1zM12 11h4v4h-4zM36 0h4v4h-4z" fill={B} stroke="none" />
          </BigTool>
          <IconStack caret items={[["rect", "矩形"], ["ellipse", "椭圆"], ["hatch", "图案填充"]]} />
        </Panel>
        <Panel w={285} pad={6} cols="75px 74px 90px 30px">
          <ToolStack items={[["move", "移动"], ["copy", "复制"], ["stretch", "拉伸"]]} />
          <ToolStack items={[["rotate", "旋转"], ["mirror", "镜像"], ["scale", "缩放"]]} />
          <ToolStack items={[["trim", "修剪", true], ["fillet", "圆角", true], ["array", "阵列", true]]} />
          <IconStack items={[["erase", "删除"], ["box", "分解"], ["offset", "偏移"]]} />
        </Panel>
        <Panel w={196} pad={6} cols="50px 56px 84px">
          <BigTool label="文字" caret>
            <path d="M4 38L17 2h7l13 36h-6l-4-11H14l-4 11zm12-16h9l-4.5-13z" fill={W} stroke="none" />
          </BigTool>
          <BigTool label="标注">
            <path d="M1 0v40M39 0v40M4 8h32" /><path d="M1 8l6-4v8zM39 8l-6-4v8z" fill={W} stroke="none" />
            {[-80, -40, 0, 40, 80].map((a) => <path key={a} d="M-1-8h2l1-7h-4z" transform={`translate(20 36) rotate(${a})`} fill={Y} stroke="none" />)}
          </BigTool>
          <ToolStack items={[["linear", "线性", true], ["leader", "引线", true], ["table", "表格"]]} />
        </Panel>
        <Panel w={315} pad={4} cols="47px 262px">
          <BigTool label={"图层\n特性"}>
            <path d="M12 20h24L24 31H0z" fill={W} stroke={c.panel} /><path d="M12 10h24L24 21H0z" fill={W} stroke={c.panel} /><path d="M12 0h24L24 12H0z" fill={W} stroke={c.panel} />
            <path d="M23 17h16v23H23z" fill="#fff" stroke="none" /><path d="M25.5 20h11v9h-11z" fill="#62b4f0" stroke="#333" /><path d="M26 33h10M26 36.5h10" stroke="#444" />
          </BigTool>
          <Stack>
            <LayerCombo />
            <LayerRow>
              {["layOff", "layIso", "layFrz", "layLock"].map((n) => <Flat key={n} aria-label={n}><Icon n={n} /></Flat>)}
              <Flat><Icon n="layCur" />置为当前</Flat>
            </LayerRow>
            <LayerRow>
              {["layOn", "layUniso", "layThaw", "layUnlock"].map((n) => <Flat key={n} aria-label={n}><Icon n={n} /></Flat>)}
              <Flat><Icon n="layMatch" />匹配图层</Flat>
            </LayerRow>
          </Stack>
        </Panel>
        <Panel w={168} pad={2} cols="51px 114px">
          <BigTool label="插入" caret>
            <path d="M18 0h15l7 8v23H18z" fill="#86c5f2" stroke="none" /><path d="M33 0v8h7z" fill="#3c4253" stroke="#86c5f2" />
            <path d="M1 13h25v18H1z" fill="#71747f" /><circle cx="26" cy="31" r="8.5" fill="#71747f" fillOpacity=".85" /><path d="M0 30h3v3H0z" fill="#fff" stroke="none" />
          </BigTool>
          <ToolStack items={[["create", "创建"], ["editBlk", "编辑"], ["editAttr", "编辑属性", true]]} />
        </Panel>
        <Panel w={305} pad={1} cols="50px 25px 225px" launcher>
          <BigTool label={"特性\n匹配"}>
            <path d="M1 0h25v36H1z" fill={W} stroke="none" /><path d="M4 3h17v13H4z" fill="#6db8f0" stroke="#3a4250" /><path d="M5 22h16M5 29h12M10 20v4M17 27v4" stroke="#555" />
            <path d="M19 28l6-4 9 8-7 8z" fill={Y} stroke="none" /><path d="M25 24l5-2 6-2 3 4-4 6z" fill="#fff" stroke="none" />
          </BigTool>
          <IconStack row={30} items={[["wheel", "对象颜色"], ["weights", "线宽"], ["dashes", "线型"]]} />
          <Stack $row={30}>
            <Combo>
              <Swatch $s={20} $m={11} />
              <Select aria-label="颜色"><option>255,255,255</option></Select>
              <Caret $big />
            </Combo>
            {["线宽列表", "线型列表"].map((l) => (
              <Combo key={l}>
                <Sample />
                <Select aria-label={l}><option>ByLayer</option></Select>
                <Caret $big />
              </Combo>
            ))}
          </Stack>
        </Panel>
        <Panel w={85} pad={3} cols="47px 30px">
          <BigTool label="组">
            <path d="M6 7H1v32h5M24 39h4V22" /><path d="M8 12h13v10H8z" fill="#41689a" stroke={B} /><circle cx="14" cy="30" r="6.5" fill="#71747f" />{star(29, 11, 1.1)}
          </BigTool>
          <IconStack on="groupSel" items={[["ungroup", "解除编组"], ["groupEdit", "组编辑"], ["groupSel", "组选择"]]} />
        </Panel>
        <Panel w={95} pad={4} cols="55px 30px">
          <BigTool label="测量" caret>
            <path d="M2 16h36v8H2z" fill={Y} stroke="none" /><path d="M5 16v3M9 16v4M13 16v3M17 16v4M21 16v3M25 16v4M29 16v3M33 16v4" stroke="#a0702c" />
          </BigTool>
          <IconStack items={[["quickSel", "快速选择"], ["selAll", "全部选择"], ["calc", "计算器"]]} />
        </Panel>
        <Panel w={95} pad={3} cols="55px 32px" foot={false}>
          <BigTool label="粘贴" caret>
            <path d="M4 5h28v31H4z" fill="#cf9a5b" stroke="none" /><path d="M11 5c0-3 4-2 5-5h4c1 3 5 2 5 5z" fill="#fff" stroke="none" /><path d="M13 13h17l6 7v21H13z" fill={W} stroke="none" /><path d="M29 12v9h8z" fill="#fff" stroke={c.panel} />
          </BigTool>
          <IconStack items={[["cut", "剪切"], ["copyDoc", "复制剪裁"]]} />
        </Panel>
        <Panel w={44} pad={7} cols="45px">
          <BigTool label="基点"><path d="M0 5h40v30H0z" fill={W} stroke="none" /></BigTool>
        </Panel>
      </Ribbon>

      <DocTabs>
        <DocTab $w={83} />
        <DocTab $on $w={156}>
          4.13*
          <Close aria-label="关闭"><Svg $w={12} viewBox="0 0 12 12"><path d="M1 1l10 10M11 1L1 11" strokeWidth="2" stroke="#a7acb6" /></Svg></Close>
        </DocTab>
        <AddTab aria-label="新建"><Svg $w={11} viewBox="0 0 12 12"><path d="M6 0v12M0 6h12" strokeWidth="2" stroke="#a7acb6" /></Svg></AddTab>
      </DocTabs>

      <Canvas>
        <Sketch />
        <ViewLabel>二维线框]</ViewLabel>
        <Timer>01:44</Timer>
        <Compass />
        <West>西</West>
        <Cube />
        <Wcs>WCS</Wcs>
        <Ime>
          <span>A</span>
          <Svg $w={18} viewBox="0 0 24 24"><path d="M0 4l7-3c2 4 8 4 10 0l7 3-2 7-4-1v13H6V10l-4 1z" fill="#344a5c" stroke="none" /></Svg>
          <Svg $w={24} viewBox="0 0 24 24"><path d="M0 0h24v24H0z" fill="#6fcfd0" stroke="none" /><path d="M5 5l11-2 4 4-1 11-10 3-5-4z" fill="#9be8e8" stroke="none" /><path d="M16 8c-4-2-8-1-8 1s7 2 7 5-4 3-8 1" stroke="#e2fbfa" strokeWidth="2" /></Svg>
        </Ime>
        <Command>
          <History>
            <HistoryLine $dim><Han>选择要修剪的对象，或按住 Shift 键选择要延伸的对象或</Han></HistoryLine>
            <HistoryLine><Han>{" [剪切边(T)/窗交(C)/模式(O)/投影(P)/删除(R)/放弃(U)]:"}</Han></HistoryLine>
            <HistoryLine><Han>指定下一个栏选点或 [放弃(U)]:</Han></HistoryLine>
          </History>
          <Prompt>
            <Grip>
              <Svg $w={7} $h={24} viewBox="0 0 7 24"><path d="M1.5 0v24M5.5 0v24" strokeWidth="2" strokeDasharray="2 2" /></Svg>
              <Svg $w={12} viewBox="0 0 12 12"><path d="M1 1l10 10M11 1L1 11" strokeWidth="2.2" /></Svg>
              <Svg $w={28} $h={20} viewBox="-6 0 30 24"><path d="M3 21L15 9" strokeWidth="4" strokeLinecap="round" /><path d="M18 1a6 6 0 0 0-5 9l3 2a6 6 0 0 0 7-6l-4 2-3-3z" fill={W} stroke="none" /></Svg>
            </Grip>
            <PromptText>
              <GreyCaret $big />
              <Verb>TRIM</Verb>
              <Han>指定下一个栏选点或 [</Han>
              <Option>放弃<Mono>(<u>U</u>)</Mono></Option>
              <Mono>]:</Mono>
              <input aria-label="命令" />
              <Caret $up />
            </PromptText>
          </Prompt>
        </Command>
        <Brand>
          <Svg $w={80} $h={84} viewBox="0 0 80 84">
            <path d="M9 14v56" stroke="#c9d8f8" strokeWidth="17" />
            <path d="M9 73L68 41" stroke="#dfe8fb" strokeWidth="17" strokeLinecap="round" />
            <path d="M9 10L68 41" stroke="#f9fafe" strokeWidth="17" strokeLinecap="round" />
          </Svg>
          <BrandLatin>ev</BrandLatin>
          <BrandHan>剪辑</BrandHan>
        </Brand>
      </Canvas>

      <Layouts>
        <LayoutTab $w={77} $pull={32}>布局1</LayoutTab>
        <LayoutTab $w={64}>布局2</LayoutTab>
        <LayoutTab $w={30} aria-label="新建布局"><Svg $w={11} viewBox="0 0 12 12"><path d="M6 0v12M0 6h12" strokeWidth="2" /></Svg></LayoutTab>
      </Layouts>

      <Status>
        <Segment><Coords>1840.7669, 1251.0731, 0.0000</Coords></Segment>
        <Segment>
          <Cell $w={40} $rule>模型</Cell>
          <Cells items={[{ i: "grid", w: 30, on: true }, { i: "dots", w: 31 }, { w: 20 }]} />
        </Segment>
        <Segment>
          <Cells items={[
            { i: "infer", w: 30 }, { i: "dyn", w: 30, on: true }, { i: "ortho", w: 31 }, { i: "polar", w: 30 }, { w: 21 },
            { i: "iso", w: 30 }, { w: 20 }, { i: "track", w: 29, on: true }, { i: "osnap", w: 33 }, { w: 20, rule: true },
            { i: "lwt", w: 31 }, { i: "checker", w: 29, on: true }, { i: "cycle", w: 32, rule: true }, { i: "snap3", w: 31 }, { w: 20 },
          ]} />
        </Segment>
        <Segment>
          <Cells items={[{ i: "ucs", w: 29 }, { i: "filter", w: 30 }, { w: 21 }, { i: "gizmo", w: 29, on: true }, { w: 21 }]} />
        </Segment>
        <Segment>
          <Cells items={[{ i: "ann1", w: 29, on: true }, { i: "ann2", w: 29 }, { i: "ann3", w: 30 }]} />
          <Scale $w={43}>1:1 <Caret $big /></Scale>
        </Segment>
        <Segment>
          <Cells items={[{ i: "gear", w: 30 }]} />
          <Workspace $w={102} $rule>草图与注释<Caret $big /></Workspace>
          <Cells items={[{ i: "plus", w: 30 }]} />
        </Segment>
        <Segment>
          <Units $w={122} $rule><Icon n="ruler" s={22} />小数<Caret $big /></Units>
          <Cells items={[{ i: "props", w: 30, on: true }]} />
        </Segment>
        <Segment>
          <Cells items={[{ i: "lockUi", w: 30 }, { w: 21, rule: true }, { i: "shapes", w: 31 }]} />
        </Segment>
        <Segment><Cells items={[{ i: "gauge", w: 30, on: true, dim: true }]} /></Segment>
        <Segment><Cell $w={30} aria-label="全屏" /></Segment>
      </Status>

      <Taskbar>
        <Task $w={198} $on>
          <Svg $w={20} viewBox="0 0 24 24"><path d="M0 0h24v24H0z" fill="#f6e4e4" stroke="none" /><path d="M3 21L9 3h6l6 18h-5l-1.5-5h-5L8 21zm7.5-9h3L12 7z" fill="#b3262c" stroke="none" /></Svg>
          Autodesk AutoCAD...
        </Task>
        <Task $w={190}>
          <Svg $w={20} viewBox="0 0 24 24"><ellipse cx="9" cy="9" rx="9" ry="8" fill="#3ecb62" stroke="none" /><path d="M3 14l-1 5 5-3z" fill="#3ecb62" stroke="none" /><ellipse cx="17" cy="16" rx="7" ry="6" fill="#eceeed" stroke="none" /><path d="M6 7h1M11 7h1M14.5 15h1M18.5 15h1" stroke="#333" strokeWidth="1.5" /></Svg>
          图片查看
        </Task>
        <Tray>
          <TrayIcon aria-label="显示隐藏的图标"><Svg $w={17} viewBox="0 0 24 24"><path d="M1 18L12 6l11 12" stroke="#fff" strokeWidth="1.8" /></Svg></TrayIcon>
          <TrayIcon aria-label="安全卫士"><Svg $w={20} viewBox="0 0 24 24"><circle cx="12" cy="12" r="12" fill="#3fb34b" stroke="none" /><path d="M2 8C8 0 18 2 22 8c2 8-4 14-10 14S0 15 2 8z" fill="#f3e43b" stroke="none" /><path d="M12 7v10M7 12h10" stroke="#2a8f38" strokeWidth="3" /></Svg></TrayIcon>
          <TrayIcon aria-label="麦克风"><Svg $w={20} viewBox="0 0 24 24"><path d="M8 1h8v16H8z" fill="#fff" stroke="none" /><path d="M5 13v6h14v-6M12 19v4M8 23h8" stroke="#fff" /></Svg></TrayIcon>
          <TrayIcon aria-label="电池"><Svg $w={20} viewBox="0 0 24 24"><path d="M6 7h16v11H6z" stroke="#fff" /><path d="M9 10h10v6H9zM22 10h2v5h-2zM0 4h6v6H0z" fill="#fff" stroke="none" /><path d="M3 8v10h3" stroke="#fff" /></Svg></TrayIcon>
          <TrayIcon aria-label="音量"><Svg $w={20} viewBox="0 0 24 24"><path d="M1 9h4l5-5v16l-5-5H1zM13 9q2 3 0 6M16 6q4 6 0 12M19.5 4q5 8 0 16" stroke="#fff" /></Svg></TrayIcon>
          <TrayIcon aria-label="网络"><Svg $w={20} viewBox="0 0 24 24"><path d="M4 22C3 12 10 4 21 4M8 22c0-7 5-13 13-13M12 22c0-5 4-8 9-8M16 21l4-4v4z" stroke="#fff" strokeWidth="1.6" /></Svg></TrayIcon>
          <TrayIcon aria-label="输入法"><Svg $w={20} viewBox="0 0 24 24"><path d="M4 22L12 2l8 20M7 15h10" stroke="#fff" strokeWidth="2" /></Svg></TrayIcon>
          <TrayIcon $w={42} aria-label="搜狗输入法"><Svg $w={20} viewBox="0 0 24 24"><path d="M1 3l21-2 1 20-20 3z" fill="#dd4b25" stroke="none" /><path d="M17 7c-5-3-10-1-10 2s10 3 10 6-5 5-11 2" stroke="#fff" strokeWidth="3" /></Svg></TrayIcon>
          <Clock>17</Clock>
        </Tray>
      </Taskbar>
    </Page>
  );
}
